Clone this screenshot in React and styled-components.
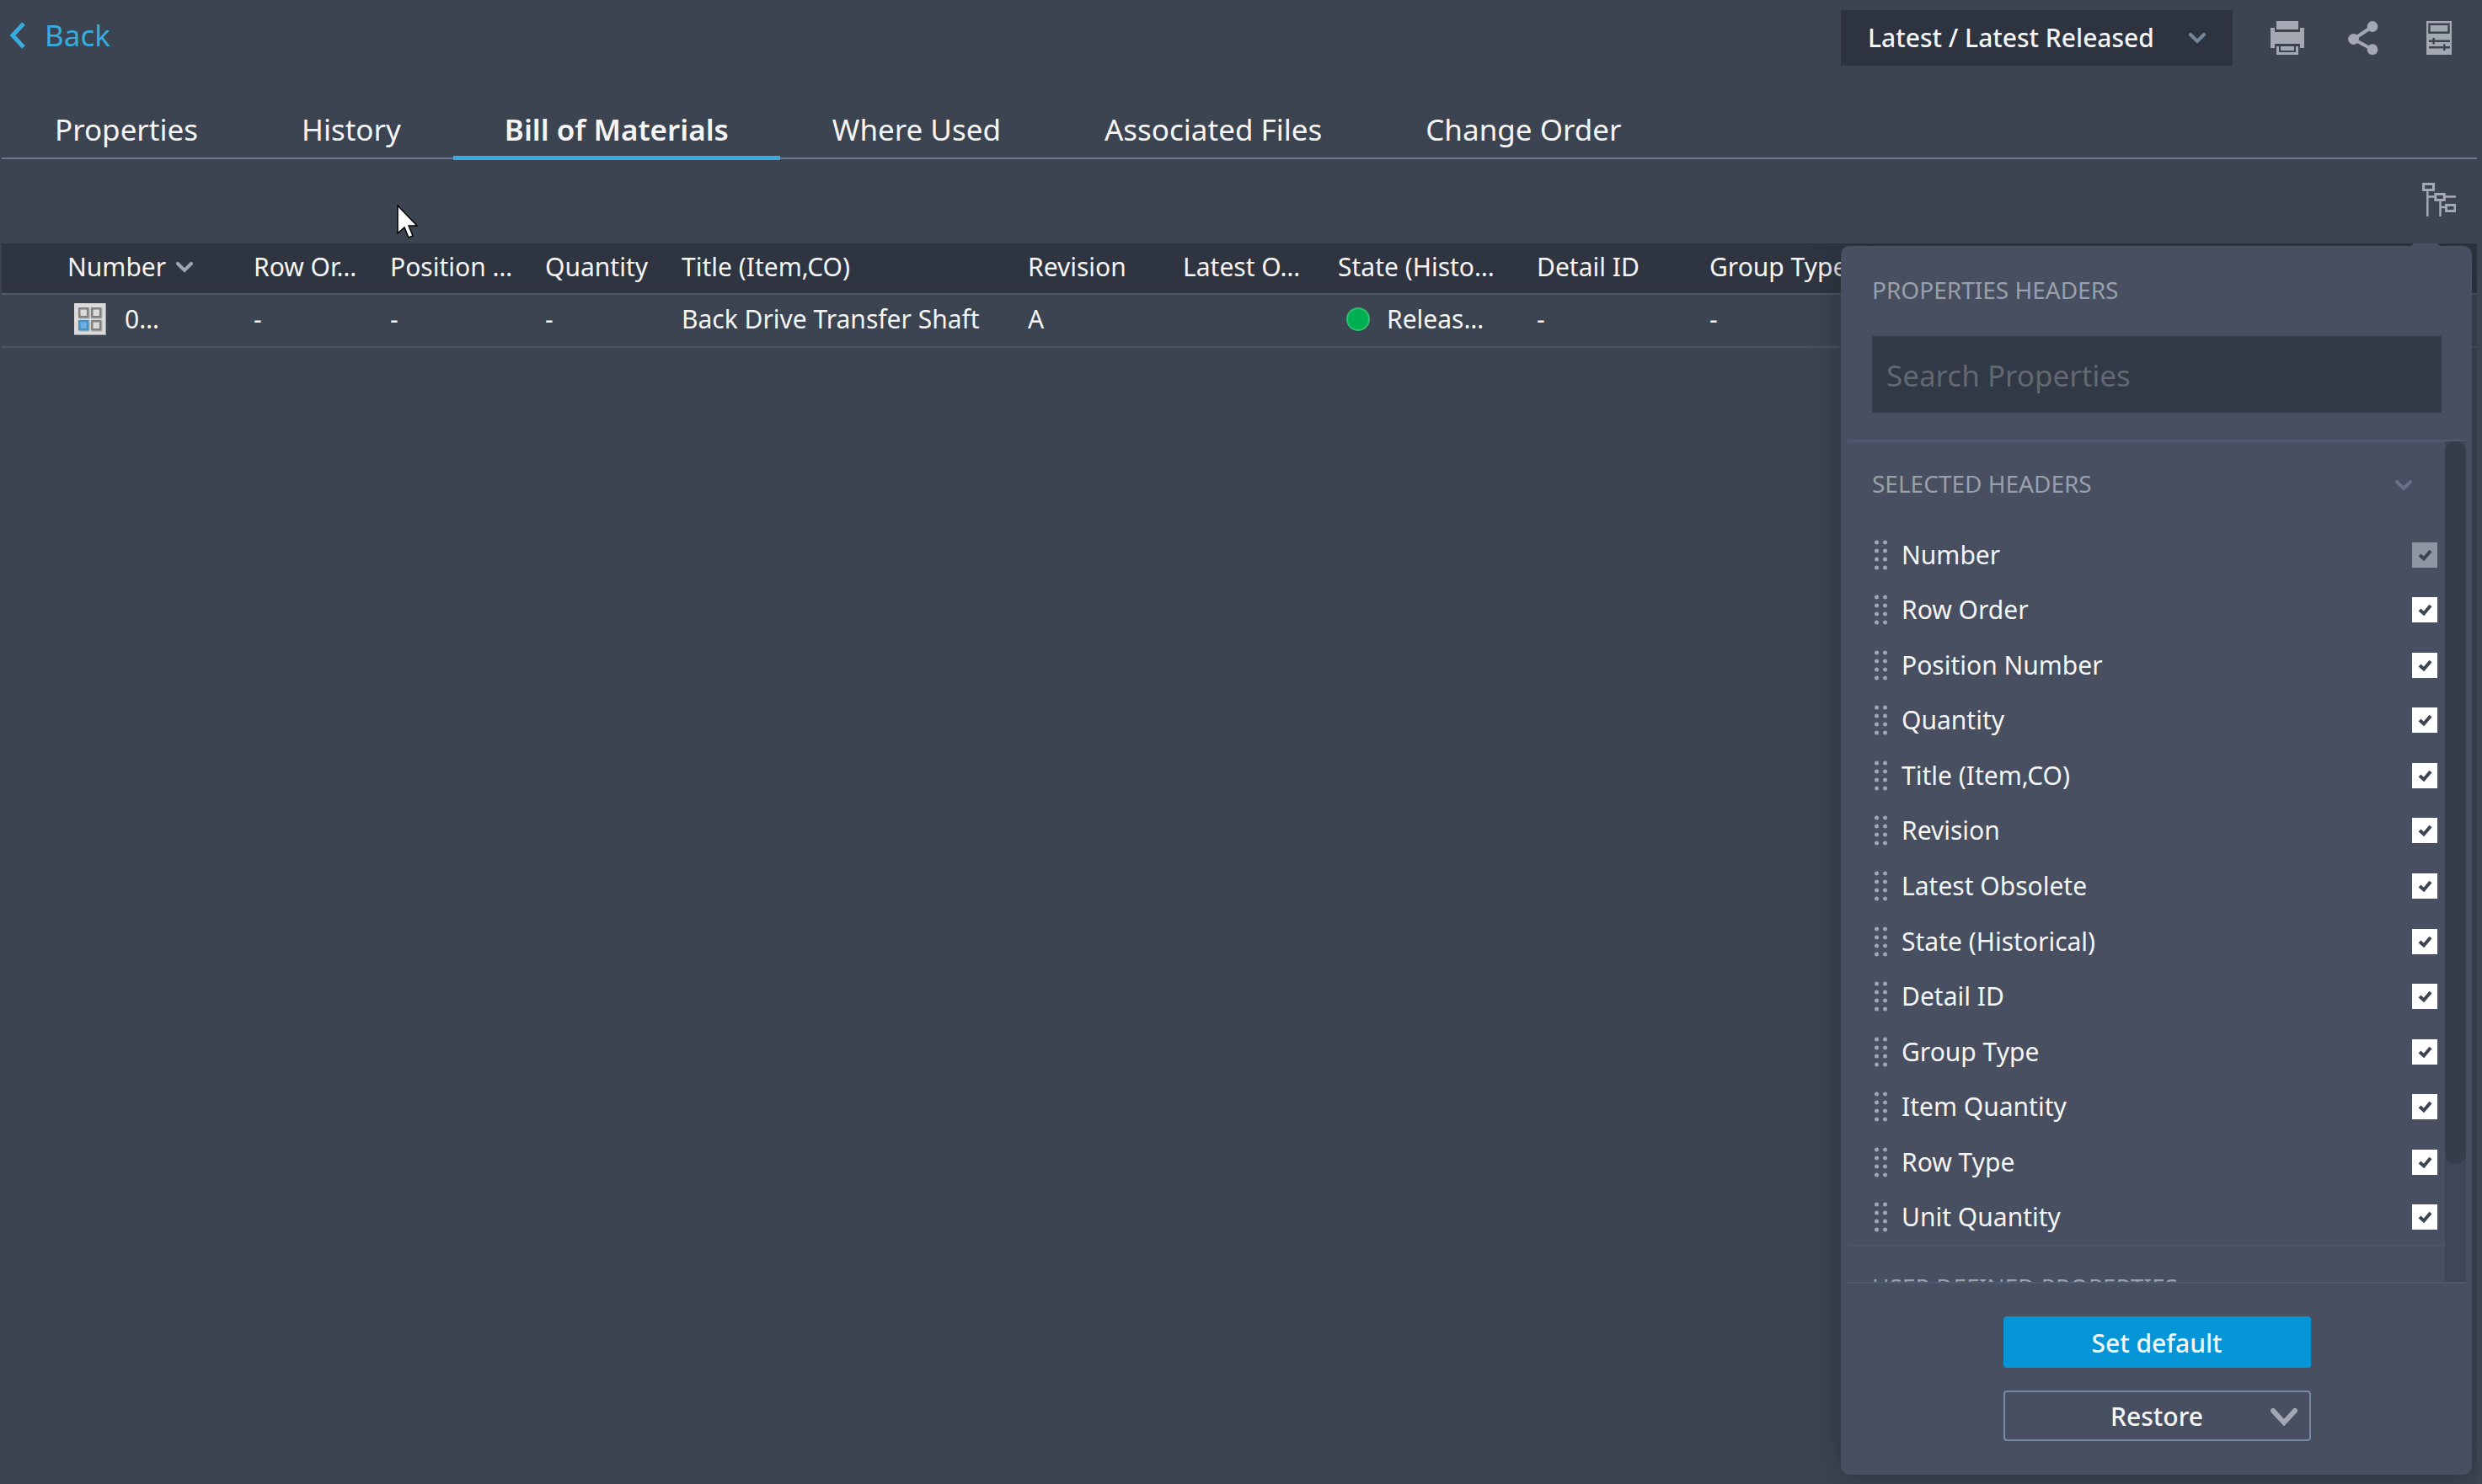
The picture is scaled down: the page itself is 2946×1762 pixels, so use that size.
import React, { useState } from 'react';
import styled, { createGlobalStyle } from 'styled-components';

const GlobalStyle = createGlobalStyle`
  * {
    box-sizing: border-box;
  }

  body {
    margin: 0;
    background-color: #3c4452;
    color: #f5f5f5;
    font-family: 'Noto Sans', 'Open Sans', sans-serif;
    font-size: 30px;
    line-height: 40px;
  }

  button,
  input,
  select {
    font: inherit;
    color: inherit;
  }
`;

const Page = styled.div`
  display: flex;
  flex-direction: column;
  height: 100vh;
  padding: 0 6px 0 2px;
`;

const TopBar = styled.header`
  display: flex;
  justify-content: space-between;
  align-items: flex-start;
  height: 124px;
  padding: 12px 25px 0 8px;
`;

const BackLink = styled.a`
  display: flex;
  align-items: center;
  gap: 21px;
  height: 60px;
  color: #38abdf;
  font-size: 35px;
  text-decoration: none;
`;

const TopActions = styled.div`
  display: flex;
  align-items: center;
  gap: 45px;
`;

const SelectBox = styled.div`
  display: grid;
  align-items: center;
  width: 465px;
  height: 66px;
  background-color: #2d3440;

  select,
  svg {
    grid-area: 1 / 1;
  }

  svg {
    justify-self: end;
    margin-right: 32px;
    pointer-events: none;
  }
`;

const ReleaseSelect = styled.select`
  width: 100%;
  height: 100%;
  padding: 0 32px;
  border: none;
  appearance: none;
  background-color: transparent;
  font-weight: 500;
`;

const IconButton = styled.button`
  display: flex;
  justify-content: center;
  width: 40px;
  height: 40px;
  padding: 0;
  border: none;
  background: none;
  color: #a3a8b3;
`;

const IconGroup = styled.div`
  display: flex;
  gap: 50px;
`;

const Tabs = styled.nav`
  display: flex;
  gap: 1px;
  padding-left: 2px;
  border-bottom: 2px solid #68788d;
`;

const Tab = styled.button`
  height: 66px;
  margin-bottom: -3px;
  padding: 0 61px 2px;
  border: none;
  border-bottom: 5px solid ${(props) => (props.$active ? '#38abdf' : 'transparent')};
  background: none;
  font-size: 35px;
  font-weight: ${(props) => (props.$active ? 600 : 400)};
`;

const Toolbar = styled.div`
  display: flex;
  justify-content: flex-end;
  align-items: center;
  height: 100px;
  padding: 0 25px 4px 0;
`;

const Content = styled.main`
  position: relative;
  flex: 1;
  min-height: 0;
  overflow: hidden;
`;

const Table = styled.table`
  width: 100%;
  table-layout: fixed;
  border-collapse: collapse;
`;

const HeadRow = styled.tr`
  height: 60px;
  background-color: #2e3541;
  border-bottom: 2px solid #4c5a6c;
`;

const BodyRow = styled.tr`
  height: 63px;
  border-bottom: 2px solid #495465;
`;

const cell = `
  padding: 0 0 3px 20px;
  font-weight: 400;
  text-align: left;
  white-space: nowrap;

  &:first-child {
    padding-left: 78px;
  }
`;

const HeadCell = styled.th`
  ${cell}
`;

const Cell = styled.td`
  ${cell}
`;

const CellLine = styled.div`
  display: flex;
  align-items: center;
  gap: ${(props) => props.$gap}px;
  padding-left: ${(props) => props.$indent || 0}px;

  svg {
    flex: none;
  }
`;

const StateDot = styled.span`
  flex: none;
  width: 28px;
  height: 28px;
  border: 2px solid #2dbd6c;
  border-radius: 50%;
  background-color: #00b050;
`;

const Panel = styled.aside`
  position: absolute;
  top: 3px;
  right: 6px;
  bottom: 11px;
  display: flex;
  flex-direction: column;
  width: 749px;
  padding: 0 7px 0 8px;
  border-radius: 10px;
  background-color: #474f61;
  box-shadow: 0 0 32px rgba(30, 40, 45, 0.6);

  &::before {
    content: '';
    position: absolute;
    top: -12px;
    right: 43px;
    width: 24px;
    height: 24px;
    background-color: #474f61;
    transform: rotate(45deg);
  }
`;

const PanelTop = styled.div`
  display: flex;
  flex-direction: column;
  gap: 35px;
  height: 230px;
  padding: 32px 29px 0;
`;

const PanelTitle = styled.h2`
  margin: 0;
  color: #9aa0aa;
  font-size: 28px;
  font-weight: 400;
`;

const SearchInput = styled.input`
  width: 100%;
  height: 91px;
  padding: 2px 16px 0;
  border: 1px solid #343d49;
  background-color: #303945;
  font-size: 35px;

  &::placeholder {
    color: #62686f;
  }
`;

const ListArea = styled.div`
  display: flex;
  flex: 1;
  min-height: 0;
  border-top: 2px solid #4d5b6f;
  border-bottom: 2px solid #4d5b6f;
`;

const List = styled.div`
  flex: 1;
  overflow-y: auto;
  scrollbar-width: none;
`;

const ScrollTrack = styled.div`
  width: 25px;
  background-color: #3e4657;
`;

const ScrollThumb = styled.div`
  height: 86%;
  border-radius: 12px;
  background-color: #363d4a;
`;

const Section = styled.section`
  border-top: 2px solid #4a576a;
`;

const SectionHead = styled.div`
  display: flex;
  justify-content: space-between;
  align-items: center;
  height: 100px;
  padding: 0 39px 4px 29px;
  color: #667287;

  svg {
    margin-top: 5px;
  }
`;

const Options = styled.div`
  display: grid;
  grid-auto-rows: 1fr;
  height: 852px;
`;

const Option = styled.label`
  display: flex;
  align-items: center;
  gap: 17px;
  padding: 0 9px 0 32px;
`;

const OptionName = styled.span`
  flex: 1;
`;

const Check = styled.span`
  display: grid;

  input,
  svg {
    grid-area: 1 / 1;
  }

  svg {
    pointer-events: none;
  }
`;

const CheckInput = styled.input`
  width: 30px;
  height: 30px;
  margin: 0;
  appearance: none;
  background-color: #fff;

  &:disabled {
    background-color: #8f95a1;
  }

  &:not(:checked) + svg {
    display: none;
  }
`;

const PanelFooter = styled.div`
  display: flex;
  flex-direction: column;
  align-items: center;
  gap: 27px;
  padding: 39px 0 40px;
`;

const PanelButton = styled.button`
  display: grid;
  align-items: center;
  width: 365px;
  height: ${(props) => (props.$primary ? 61 : 60)}px;
  padding: 2px 14px 0;
  border: ${(props) => (props.$primary ? 'none' : '2px solid #7589a0')};
  border-radius: 4px;
  background-color: ${(props) => (props.$primary ? '#0696d7' : 'transparent')};
  font-weight: 500;

  span,
  svg {
    grid-area: 1 / 1;
  }

  svg {
    justify-self: end;
  }
`;

const Pointer = styled.svg`
  position: absolute;
  top: 243px;
  left: 471px;
`;

// label is the shortened name for columns too narrow for the full one
const columns = [
  { name: 'Number', width: 279 },
  { name: 'Row Order', label: 'Row Or…', width: 162 },
  { name: 'Position Number', label: 'Position …', width: 184 },
  { name: 'Quantity', width: 162 },
  { name: 'Title (Item,CO)', width: 411 },
  { name: 'Revision', width: 184 },
  { name: 'Latest Obsolete', label: 'Latest O…', width: 184 },
  { name: 'State (Historical)', label: 'State (Histo…', width: 236 },
  { name: 'Detail ID', width: 205 },
  { name: 'Group Type' },
];

const tabs = [
  'Properties',
  'History',
  'Bill of Materials',
  'Where Used',
  'Associated Files',
  'Change Order',
];

const headerOptions = [
  ...columns.map((column) => column.name),
  'Item Quantity',
  'Row Type',
  'Unit Quantity',
];

function Chevron({ width = 20, height = 13, stroke = 4, color = 'currentColor' }) {
  const pad = stroke / 2;
  return (
    <svg width={width} height={height} fill="none" stroke={color} strokeWidth={stroke}>
      <path d={`M${pad} ${pad} L${width / 2} ${height - pad - 1} L${width - pad} ${pad}`} strokeLinecap="round" />
    </svg>
  );
}

function PrintIcon() {
  return (
    <svg width="40" height="40" fill="currentColor">
      <path d="M7 0h26v10H7z M0 8h5v5h30V8h5v24h-5v-5H5v5H0z" />
      <path d="M7 30h3v7h20v-7h3v10H7z M12 30h16v5H12z" />
    </svg>
  );
}

function ShareIcon() {
  return (
    <svg width="36" height="40" fill="currentColor">
      <path d="M29 6.5L6.5 21.5L29 33.7" fill="none" stroke="currentColor" strokeWidth="4" />
      <circle cx="6.5" cy="21.5" r="6.4" />
      <circle cx="29" cy="6.5" r="6.4" />
      <circle cx="29" cy="33.7" r="6.4" />
    </svg>
  );
}

function SettingsIcon() {
  return (
    <svg width="30" height="40">
      <path d="M0 0h30v40H0z" fill="currentColor" />
      <path
        d="M3.5 3.8h23v10h-23z M3 23.7h25 M8.7 20v7.5 M3 31.3h25 M21.3 27.5v7.5"
        fill="none"
        stroke="#3c4452"
        strokeWidth="2.5"
      />
    </svg>
  );
}

function TreeIcon() {
  return (
    <svg width="40" height="40" fill="none" stroke="currentColor" strokeWidth="2.5">
      <path d="M1.5 1.5h12v7h-12z M15.8 13.5h10.5v7H15.8z M28.5 26.5H39v7H28.5z" strokeWidth="3" />
      <path d="M6.3 10v30 M21.5 22v18 M6 16.5h9 M27 16.5h13 M21 29h6" />
    </svg>
  );
}

function ItemIcon() {
  return (
    <svg width="38" height="38">
      <path d="M0 0h38v38H0z" fill="#969ca5" />
      <path d="M0 0h37v37H0z" fill="#dadada" />
      <path d="M18 6v12H6 M33 6v12H21 M33 21v12H21 M18 21v12H6" fill="none" stroke="#a6a6a6" />
      <path d="M6.2 6.2h10v10h-10z M21.2 6.2h10v10h-10z M21.2 21.2h10v10h-10z" fill="none" stroke="#808080" strokeWidth="2.5" />
      <path d="M6.2 21.2h10v10h-10z" fill="#69afe5" stroke="#4a8dc0" strokeWidth="2.5" />
    </svg>
  );
}

function DragHandle() {
  return (
    <svg width="15" height="36" fill="#a0a5b0">
      {[3, 13, 23, 33].map((y) => (
        <React.Fragment key={y}>
          <circle cx="2.5" cy={y} r="2.5" />
          <circle cx="12.5" cy={y} r="2.5" />
        </React.Fragment>
      ))}
    </svg>
  );
}

function HeaderOption({ name, disabled }) {
  return (
    <Option>
      <DragHandle />
      <OptionName>{name}</OptionName>
      <Check>
        <CheckInput type="checkbox" defaultChecked disabled={disabled} />
        <svg width="30" height="30" fill="none" stroke="#3c4452" strokeWidth="4">
          <path d="M9 15l5 4.5l8-9.5" />
        </svg>
      </Check>
    </Option>
  );
}

function PropertiesPanel() {
  return (
    <Panel>
      <PanelTop>
        <PanelTitle>PROPERTIES HEADERS</PanelTitle>
        <SearchInput type="text" placeholder="Search Properties" aria-label="Search Properties" />
      </PanelTop>

      <ListArea>
        <List>
          <Section>
            <SectionHead>
              <PanelTitle>SELECTED HEADERS</PanelTitle>
              <Chevron />
            </SectionHead>
            <Options>
              {headerOptions.map((name) => (
                <HeaderOption key={name} name={name} disabled={name === 'Number'} />
              ))}
            </Options>
          </Section>
          <Section>
            <SectionHead>
              <PanelTitle>USER DEFINED PROPERTIES</PanelTitle>
              <Chevron />
            </SectionHead>
          </Section>
        </List>
        <ScrollTrack>
          <ScrollThumb />
        </ScrollTrack>
      </ListArea>

      <PanelFooter>
        <PanelButton $primary>
          <span>Set default</span>
        </PanelButton>
        <PanelButton>
          <span>Restore</span>
          <Chevron width={32} height={21} stroke={6} color="#a3a8b3" />
        </PanelButton>
      </PanelFooter>
    </Panel>
  );
}

export default function App() {
  const [activeTab, setActiveTab] = useState('Bill of Materials');

  return (
    <Page>
      <GlobalStyle />

      <TopBar>
        <BackLink href="#">
          <svg width="22" height="32" fill="none" stroke="currentColor" strokeWidth="5">
            <path d="M18 2L5 16l13 14" />
          </svg>
          Back
        </BackLink>
        <TopActions>
          <SelectBox>
            <ReleaseSelect aria-label="Release">
              <option>Latest / Latest Released</option>
            </ReleaseSelect>
            <Chevron color="#71859b" />
          </SelectBox>
          <IconGroup>
            <IconButton aria-label="Print">
              <PrintIcon />
            </IconButton>
            <IconButton aria-label="Share">
              <ShareIcon />
            </IconButton>
            <IconButton aria-label="Settings">
              <SettingsIcon />
            </IconButton>
          </IconGroup>
        </TopActions>
      </TopBar>

      <Tabs>
        {tabs.map((name) => (
          <Tab key={name} $active={name === activeTab} onClick={() => setActiveTab(name)}>
            {name}
          </Tab>
        ))}
      </Tabs>

      <Toolbar>
        <IconButton aria-label="Structure">
          <TreeIcon />
        </IconButton>
      </Toolbar>

      <Content>
        <Table>
          <colgroup>
            {columns.map((column) => (
              <col key={column.name} width={column.width} />
            ))}
          </colgroup>
          <thead>
            <HeadRow>
              {columns.map((column, index) => (
                <HeadCell key={column.name}>
                  {index === 0 ? (
                    <CellLine $gap={12}>
                      {column.name}
                      <Chevron color="#a0a5b0" />
                    </CellLine>
                  ) : (
                    column.label || column.name
                  )}
                </HeadCell>
              ))}
            </HeadRow>
          </thead>
          <tbody>
            <BodyRow>
              <Cell>
                <CellLine $gap={22} $indent={8}>
                  <ItemIcon />
                  0…
                </CellLine>
              </Cell>
              <Cell>-</Cell>
              <Cell>-</Cell>
              <Cell>-</Cell>
              <Cell>Back Drive Transfer Shaft</Cell>
              <Cell>A</Cell>
              <Cell />
              <Cell>
                <CellLine $gap={20} $indent={10}>
                  <StateDot />
                  Releas…
                </CellLine>
              </Cell>
              <Cell>-</Cell>
              <Cell>-</Cell>
            </BodyRow>
          </tbody>
        </Table>
        <PropertiesPanel />
      </Content>

      {/* Mouse pointer */}
      <Pointer width="28" height="42" viewBox="0 0 28 42">
        <path d="M1 1v33l8-7l5 12l5-2l-5-12h10z" fill="#fff" stroke="#000" strokeWidth="1.5" />
      </Pointer>
    </Page>
  );
}
